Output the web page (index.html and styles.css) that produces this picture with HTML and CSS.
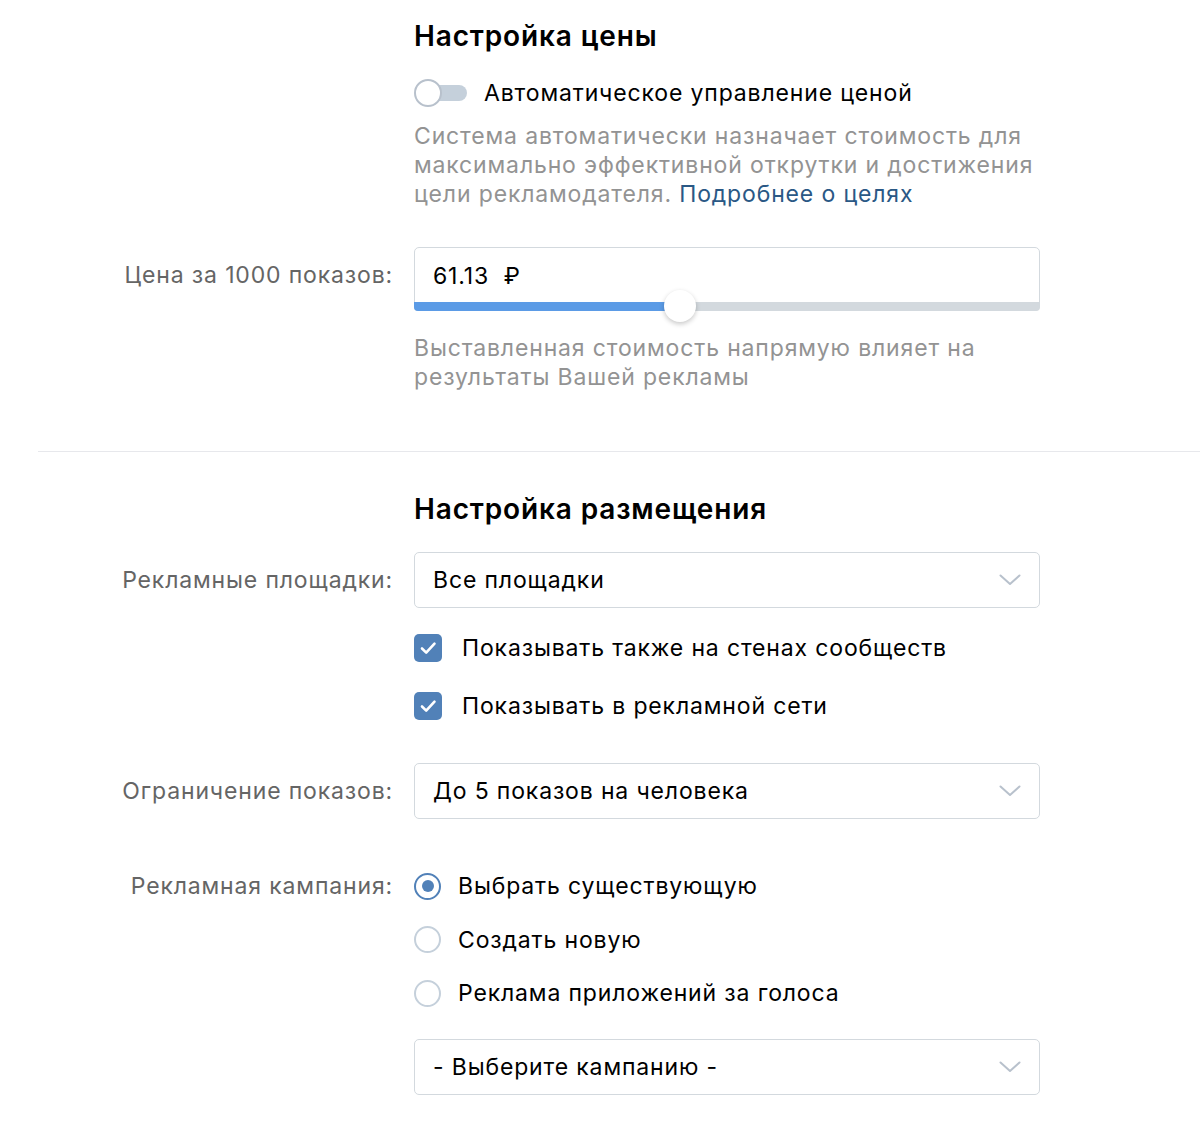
FILE: index.html
```html
<!DOCTYPE html>
<html lang="ru">
<head>
<meta charset="utf-8">
<title>Настройка цены</title>
<link rel="stylesheet" href="styles.css">
</head>
<body>
<div class="page">
  <section class="section">
    <div class="row">
      <div class="label"></div>
      <h2 class="title">Настройка цены</h2>
    </div>
    <div class="row row-toggle">
      <div class="label"></div>
      <div class="toggle-line">
        <span class="toggle"><span class="toggle-track"></span><span class="toggle-knob"></span></span>
        <span class="text">Автоматическое управление ценой</span>
      </div>
    </div>
    <div class="row row-desc">
      <div class="label"></div>
      <p class="hint">Система автоматически назначает стоимость для максимально эффективной открутки и достижения цели рекламодателя. <a class="link" href="#">Подробнее о целях</a></p>
    </div>
    <div class="row row-price">
      <div class="label label-price">Цена за 1000 показов:</div>
      <div class="price-box">
        <div class="price-value">61.13&nbsp; ₽</div>
        <div class="slider">
          <div class="slider-fill" style="width: 42.5%"></div>
          <div class="slider-knob" style="left: 42.5%"></div>
        </div>
      </div>
    </div>
    <div class="row row-hint2">
      <div class="label"></div>
      <p class="hint">Выставленная стоимость напрямую влияет на<br>результаты Вашей рекламы</p>
    </div>
  </section>

  <hr class="divider">

  <section class="section">
    <div class="row row-title2">
      <div class="label"></div>
      <h2 class="title">Настройка размещения</h2>
    </div>
    <div class="row row-select1">
      <div class="label">Рекламные площадки:</div>
      <div class="select"><span>Все площадки</span><svg class="chev" viewBox="0 0 22 12"><path d="M1.5 1.5 L11 10 L20.5 1.5"/></svg></div>
    </div>
    <div class="row row-check1">
      <div class="label"></div>
      <div class="check-line">
        <span class="checkbox"><svg viewBox="0 0 28 28"><path d="M8 14.5 L12.2 18.6 L20.5 9.6"/></svg></span>
        <span class="text">Показывать также на стенах сообществ</span>
      </div>
    </div>
    <div class="row row-check2">
      <div class="label"></div>
      <div class="check-line">
        <span class="checkbox"><svg viewBox="0 0 28 28"><path d="M8 14.5 L12.2 18.6 L20.5 9.6"/></svg></span>
        <span class="text">Показывать в рекламной сети</span>
      </div>
    </div>
    <div class="row row-select2">
      <div class="label">Ограничение показов:</div>
      <div class="select"><span>До 5 показов на человека</span><svg class="chev" viewBox="0 0 22 12"><path d="M1.5 1.5 L11 10 L20.5 1.5"/></svg></div>
    </div>
    <div class="row row-radios">
      <div class="label label-top">Рекламная кампания:</div>
      <div class="radios">
        <div class="radio-line"><span class="radio radio-on"></span><span class="text">Выбрать существующую</span></div>
        <div class="radio-line"><span class="radio"></span><span class="text">Создать новую</span></div>
        <div class="radio-line"><span class="radio"></span><span class="text">Реклама приложений за голоса</span></div>
      </div>
    </div>
    <div class="row row-select3">
      <div class="label"></div>
      <div class="select"><span>- Выберите кампанию -</span><svg class="chev" viewBox="0 0 22 12"><path d="M1.5 1.5 L11 10 L20.5 1.5"/></svg></div>
    </div>
  </section>
</div>
</body>
</html>
```
FILE: styles.css
```css
* { box-sizing: border-box; }
html, body { margin: 0; padding: 0; background: #fff; }
body {
  font-family: Inter, "Noto Sans", "DejaVu Sans", sans-serif;
  font-size: 23px;
  letter-spacing: 0.85px;
  color: #000;
  width: 1200px;
}
.page { padding-top: 19px; padding-bottom: 30px; }
.row {
  display: grid;
  grid-template-columns: 393px 626px;
  column-gap: 21px;
  align-items: center;
}
.label {
  text-align: right;
  color: #656565;
  line-height: 30px;
  white-space: nowrap;
}
.label-top { align-self: start; }
.label-price { align-self: start; padding-top: 13px; }
.title {
  margin: 0;
  font-size: 28px;
  line-height: 34px;
  font-weight: 600;
  color: #000;
}
.text { line-height: 30px; }
.row-toggle { margin-top: 25px; }
.toggle-line { display: flex; align-items: center; gap: 16px; }
.toggle { position: relative; width: 54px; height: 28px; flex: none; }
.toggle-track {
  position: absolute; left: 14px; right: 1px; top: 6px; height: 16px;
  background: #c5d0db; border-radius: 8px;
}
.toggle-knob {
  position: absolute; left: 0; top: 0; width: 28px; height: 28px;
  background: #fff; border: 2px solid #b8c1cc; border-radius: 50%;
}
.hint {
  margin: 0;
  color: #939393;
  line-height: 29px;
}
.link { color: #2a5885; text-decoration: none; }
.row-desc { margin-top: 14px; }
.row-price { margin-top: 38px; }
.price-box {
  position: relative;
  height: 64px;
  border: 1px solid #d3d9de;
  border-radius: 5px;
}
.price-value {
  padding-left: 18px;
  height: 56px;
  line-height: 56px;
}
.slider {
  position: absolute; left: -1px; right: -1px; bottom: -1px; height: 9px;
  background: #d3d9de;
  border-radius: 0 0 4px 4px;
}
.slider-fill {
  height: 100%;
  background: #5b9be6;
  border-radius: 0 0 0 4px;
}
.slider-knob {
  position: absolute; top: -12px; width: 32px; height: 32px; margin-left: -16px;
  background: #fff; border-radius: 50%;
  box-shadow: 0 2px 5px rgba(0,0,0,0.22);
}
.row-hint2 { margin-top: 23px; }
.divider {
  border: 0; border-top: 1px solid #e7e8ec;
  margin: 59px 0 0 38px;
  height: 0;
}
.row-title2 { margin-top: 40px; }
.select {
  display: flex; align-items: center; justify-content: space-between;
  height: 56px;
  border: 1px solid #d3d9de;
  border-radius: 5px;
  padding: 0 18px 0 18px;
}
.chev { width: 22px; height: 12px; }
.chev path { fill: none; stroke: #b8c1cc; stroke-width: 2; stroke-linecap: round; stroke-linejoin: round; }
.row-select1 { margin-top: 26px; }
.check-line { display: flex; align-items: center; gap: 20px; }
.checkbox {
  width: 28px; height: 28px; flex: none;
  background: #5181b8; border-radius: 5px;
  display: flex;
}
.checkbox svg { width: 28px; height: 28px; }
.checkbox path { fill: none; stroke: #fff; stroke-width: 2.6; stroke-linecap: round; stroke-linejoin: round; }
.row-check1 { margin-top: 25px; }
.row-check2 { margin-top: 28px; }
.row-select2 { margin-top: 42px; }
.row-radios { margin-top: 52px; }
.radios { display: flex; flex-direction: column; gap: 23.5px; }
.radio-line { display: flex; align-items: center; gap: 17px; }
.radio {
  width: 27px; height: 27px; flex: none;
  border: 2px solid #c5d0db; border-radius: 50%;
  display: flex; align-items: center; justify-content: center;
}
.radio-on { border-color: #5181b8; }
.radio-on::after {
  content: ""; width: 12px; height: 12px; border-radius: 50%; background: #5181b8;
}
.row-select3 { margin-top: 31px; }
```
